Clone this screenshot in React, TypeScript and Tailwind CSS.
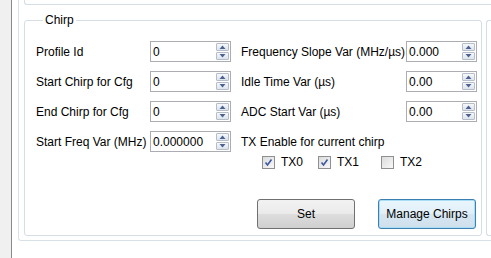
import React from "react";

const FONT = { fontFamily: '"Liberation Sans", Arial, sans-serif' };

function SpinBox({ value, width }: { value: string; width: string }) {
  return (
    <div className={`flex h-[21px] ${width} border border-[#abadb3] bg-white`}>
      <div className="flex-1 pl-[2px] pt-[3px] leading-[14px] text-[12px] text-black">{value}</div>
      <div className="flex flex-col gap-[1px] pt-[1px] pr-[1px]">
        <div className="flex h-[8px] w-[13px] items-center justify-center rounded-[1px] border border-[#b5bdc8] bg-gradient-to-b from-[#f6f8fb] to-[#dde4ee]">
          <svg width="7" height="4" viewBox="0 0 7 4">
            <path d="M0.5 4 L3.5 0.5 L6.5 4 Z" fill="#4c6390" />
          </svg>
        </div>
        <div className="flex h-[8px] w-[13px] items-center justify-center rounded-[1px] border border-[#b5bdc8] bg-gradient-to-b from-[#f6f8fb] to-[#dde4ee]">
          <svg width="7" height="4" viewBox="0 0 7 4">
            <path d="M0.5 0 L3.5 3.5 L6.5 0 Z" fill="#4c6390" />
          </svg>
        </div>
      </div>
    </div>
  );
}

function Check({ label, checked, width }: { label: string; checked: boolean; width: string }) {
  return (
    <div className={`flex items-center ${width}`}>
      <div className="flex h-[13px] w-[13px] items-center justify-center border border-[#8e8f8f] bg-gradient-to-br from-[#dcdcdc] to-[#f8f8f8]">
        {checked && (
          <svg width="9" height="9" viewBox="0 0 9 9">
            <path d="M1.5 4.5 L3.5 7 L7.5 1.5" fill="none" stroke="#3d57a0" strokeWidth="1.6" />
          </svg>
        )}
      </div>
      <span className="ml-[6px] text-[12px] leading-[14px] text-black">{label}</span>
    </div>
  );
}

function Row({
  left,
  leftValue,
  right,
  rightValue,
}: {
  left: string;
  leftValue: string;
  right: string;
  rightValue?: string;
}) {
  return (
    <div className="flex h-[21px] items-center">
      <div className="w-[114px] text-[12px] leading-[14px] text-black">{left}</div>
      <SpinBox value={leftValue} width="w-[81px]" />
      <div className="ml-[10px] w-[165px] text-[12px] leading-[14px] text-black">{right}</div>
      {rightValue !== undefined && <SpinBox value={rightValue} width="w-[71px]" />}
    </div>
  );
}

export default function App() {
  return (
    <div className="flex h-[258px] w-[491px] overflow-hidden bg-white" style={FONT}>
      {/* left strip */}
      <div className="w-[12px] shrink-0 border-r border-[#8a8a8a] bg-[#f0f0f0]" />

      <div className="flex-1 pl-[6px]">
        {/* outer panel */}
        <div className="h-[241px] rounded-bl-[3px] border-b border-l border-[#d9e1e8] pl-[5px]">
          {/* bottom of group above */}
          <div className="h-[5px] rounded-bl-[3px] border-b border-l border-[#d5dde5]" />

          <div className="mt-[8px] flex">
            {/* Chirp group */}
            <fieldset className="h-[223px] w-[458px] shrink-0 rounded-[3px] border border-[#d5dde5] pl-[11px]">
              <legend className="ml-[7px] px-[2px] text-[12px] leading-[14px] text-black">Chirp</legend>

              <div className="flex flex-col gap-[9px] pt-[14px]">
                <Row left="Profile Id" leftValue="0" right="Frequency Slope Var (MHz/µs)" rightValue="0.000" />
                <Row left="Start Chirp for Cfg" leftValue="0" right="Idle Time Var (µs)" rightValue="0.00" />
                <Row left="End Chirp for Cfg" leftValue="0" right="ADC Start Var (µs)" rightValue="0.00" />
                <Row left="Start Freq Var (MHz)" leftValue="0.000000" right="TX Enable for current chirp" />
              </div>

              <div className="ml-[226px] mt-[3px] flex">
                <Check label="TX0" checked width="w-[56px]" />
                <Check label="TX1" checked width="w-[63px]" />
                <Check label="TX2" checked={false} width="w-[50px]" />
              </div>

              <div className="ml-[221px] mt-[30px] flex gap-[23px]">
                <button className="h-[30px] w-[98px] rounded-[3px] border border-[#707070] bg-[linear-gradient(#f2f2f2_0%,#ebebeb_48%,#dddddd_52%,#cfcfcf_100%)] text-[12px] text-black">
                  Set
                </button>
                <button className="h-[30px] w-[98px] rounded-[3px] border border-[#3c7fb1] bg-[linear-gradient(#eaf6fd_0%,#e3eff8_48%,#d6e6f1_52%,#cfdfeb_100%)] text-[12px] text-black shadow-[inset_0_0_0_1px_#a9dcf7]">
                  Manage Chirps
                </button>
              </div>
            </fieldset>

            {/* neighbouring group */}
            <div className="ml-[4px] mt-[7px] h-[216px] flex-1 rounded-tl-[3px] rounded-bl-[3px] border-b border-l border-t border-[#d5dde5]" />
          </div>
        </div>
      </div>
    </div>
  );
}
